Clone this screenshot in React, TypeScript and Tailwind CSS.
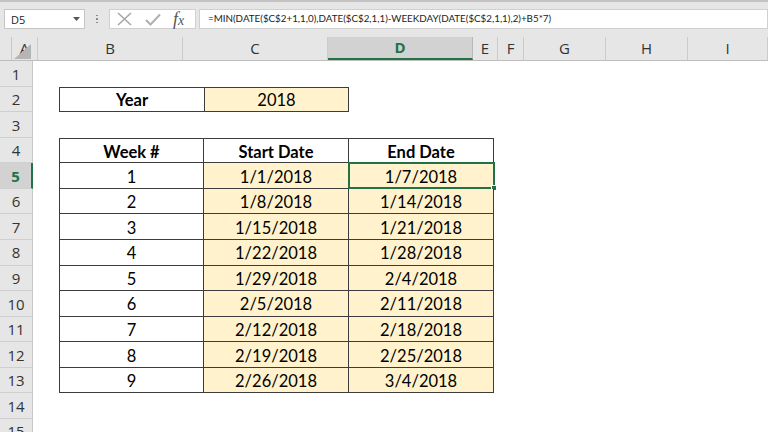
import React from "react";

type Col = { k: string; w: string };
const cols: Col[] = [
  { k: "A", w: "w-[26px]" },
  { k: "B", w: "w-[145px]" },
  { k: "C", w: "w-[145px]" },
  { k: "D", w: "w-[145px]" },
  { k: "E", w: "w-[25px]" },
  { k: "F", w: "w-[26px]" },
  { k: "G", w: "w-[82px]" },
  { k: "H", w: "w-[82px]" },
  { k: "I", w: "w-[80px]" },
];

const starts = ["1/1/2018", "1/8/2018", "1/15/2018", "1/22/2018", "1/29/2018", "2/5/2018", "2/12/2018", "2/19/2018", "2/26/2018"];
const ends = ["1/7/2018", "1/14/2018", "1/21/2018", "1/28/2018", "2/4/2018", "2/11/2018", "2/18/2018", "2/25/2018", "3/4/2018"];

type CellInfo = { text?: string; bold?: boolean; fill?: boolean; cls: string; selected?: boolean };

function cellInfo(r: number, k: string): CellInfo {
  const line = "border-[#3c3c3c]";
  if (r === 2) {
    if (k === "B") return { text: "Year", bold: true, cls: `border border-r-0 ${line}` };
    if (k === "C") return { text: "2018", fill: true, cls: `border ${line}` };
  }
  if (r >= 4 && r <= 13) {
    const top = r === 4 ? "border-t" : "";
    if (k === "B") {
      return { text: r === 4 ? "Week #" : String(r - 4), bold: r === 4, cls: `border-l border-r border-b ${top} ${line}` };
    }
    if (k === "C") {
      return { text: r === 4 ? "Start Date" : starts[r - 5], bold: r === 4, fill: r > 4, cls: `border-r border-b ${top} ${line}` };
    }
    if (k === "D") {
      return { text: r === 4 ? "End Date" : ends[r - 5], bold: r === 4, fill: r > 4, cls: `border-r border-b ${top} ${line}`, selected: r === 5 };
    }
  }
  return { cls: "" };
}

function Corner() {
  return (
    <div className="w-[33px] h-full relative border-r border-[#c8c8c8]">
      <svg className="absolute left-[14px] top-[7px]" width="17" height="15" viewBox="0 0 17 15">
        <polygon points="17,0 17,15 0,15" fill="#b5b5b5" />
      </svg>
    </div>
  );
}

export default function App() {
  const rows = Array.from({ length: 15 }, (_, i) => i + 1);
  return (
    <div className="w-[768px] h-[432px] overflow-hidden bg-white" style={{ fontFamily: "Lato, 'Open Sans', sans-serif" }}>
      {/* Formula bar */}
      <div className="h-[37px] bg-[#e6e6e6] border-t-2 border-[#c2c2c2] pt-[7px] flex items-start" style={{ fontFamily: "'Open Sans', 'Noto Sans', sans-serif" }}>
        <div className="ml-[4px] w-[81px] h-[20px] bg-white border border-[#c6c6c6] flex items-center justify-between pl-[6px] pr-[4px]">
          <span className="text-[11px] text-[#222] leading-none">D5</span>
          <svg width="7" height="4" viewBox="0 0 7 4"><polygon points="0,0 7,0 3.5,4" fill="#555" /></svg>
        </div>
        <div className="ml-[11px] w-[2px] h-[20px] flex flex-col justify-center gap-[2px]">
          <div className="w-[2px] h-[1.5px] bg-[#8a8a8a]" />
          <div className="w-[2px] h-[1.5px] bg-[#8a8a8a]" />
          <div className="w-[2px] h-[1.5px] bg-[#8a8a8a]" />
        </div>
        <div className="ml-[11px] w-[87px] h-[20px] bg-white border border-[#d0d0d0] flex items-center">
          <svg className="ml-[7px]" width="15" height="14" viewBox="0 0 15 14">
            <path d="M1 1 L14 13 M14 1 L1 13" stroke="#a8a8a8" strokeWidth="1.6" fill="none" />
          </svg>
          <svg className="ml-[13px]" width="16" height="13" viewBox="0 0 16 13">
            <path d="M1 7 L5.5 11.5 L15 1.5" stroke="#b0b0b0" strokeWidth="2" fill="none" />
          </svg>
          <span className="ml-[12px] text-[18px] leading-none text-[#555] italic" style={{ fontFamily: "'Liberation Serif', serif" }}>
            f<span className="text-[14px]">x</span>
          </span>
        </div>
        <div className="ml-[3px] flex-1 h-[20px] bg-white border border-[#d0d0d0] flex items-center pl-[8px]">
          <span className="text-[9.8px] text-[#222] leading-none whitespace-nowrap" style={{ fontFamily: "Lato, sans-serif" }}>=MIN(DATE($C$2+1,1,0),DATE($C$2,1,1)-WEEKDAY(DATE($C$2,1,1),2)+B5*7)</span>
        </div>
      </div>

      {/* Column headers */}
      <div className="h-[24px] flex bg-[#e6e6e6] border-b border-[#bdbdbd]" style={{ fontFamily: "'Open Sans', 'Noto Sans', sans-serif" }}>
        <Corner />
        {cols.map((c) => {
          const sel = c.k === "D";
          return (
            <div
              key={c.k}
              className={`${c.w} shrink-0 h-full flex items-center justify-center text-[15px] border-r ${sel ? "bg-[#d2d2d2] border-[#b8b8b8] border-b-2 border-b-[#217346] text-[#217346] font-bold" : "border-[#cbcbcb] text-[#333]"}`}
            >
              {c.k}
            </div>
          );
        })}
      </div>

      {/* Rows */}
      {rows.map((r) => {
        const selRow = r === 5;
        return (
          <div key={r} className="h-[25.57px] flex">
            <div
              className={`w-[33px] shrink-0 h-full flex items-center justify-center text-[15px] pt-[1px] border-b border-[#cfcfcf] ${selRow ? "bg-[#d2d2d2] text-[#217346] font-bold border-r-2 border-r-[#217346]" : "bg-[#e6e6e6] text-[#333] border-r border-r-[#c8c8c8]"}`}
              style={{ fontFamily: "'Open Sans', 'Noto Sans', sans-serif" }}
            >
              {r}
            </div>
            {cols.map((c) => {
              const info = cellInfo(r, c.k);
              return (
                <div
                  key={c.k}
                  className={`${c.w} shrink-0 h-full relative flex items-center justify-center pt-[3px] text-[16.5px] text-black ${info.fill ? "bg-[#fff2cc]" : ""} ${info.bold ? "font-bold" : ""} ${info.cls}`}
                >
                  {info.text}
                  {info.selected && (
                    <>
                      <div className="absolute left-[-1px] top-[-1px] right-[-2px] bottom-[-1px] border-2 border-[#217346]" />
                      <div className="absolute right-[-4px] bottom-[-3px] w-[6px] h-[6px] bg-[#217346] border border-white" />
                    </>
                  )}
                </div>
              );
            })}
          </div>
        );
      })}
    </div>
  );
}
